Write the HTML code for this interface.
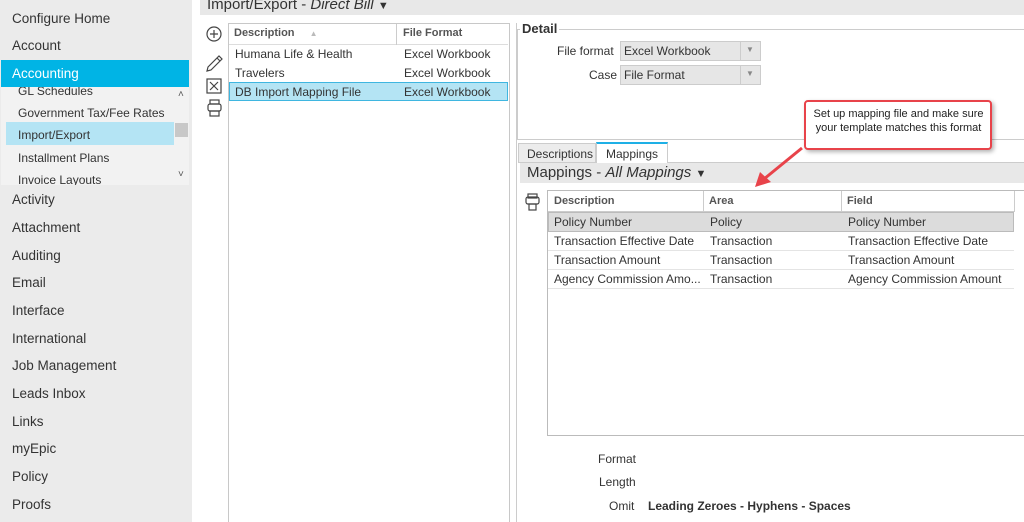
<!DOCTYPE html>
<html><head><style>
*{margin:0;padding:0;box-sizing:border-box}
body{width:1024px;height:522px;overflow:hidden;background:#fff;font-family:"Liberation Sans",sans-serif;font-size:12px;color:#333;position:relative}
.a{position:absolute;white-space:nowrap}
.side{left:0;top:0;width:192px;height:522px;background:#ebebeb}
.si{left:12px;font-size:13.5px;color:#333}
.sub{left:18px;font-size:12px;color:#333}
.hdr{background:#e8e8e8}
.b{font-weight:bold;color:#555;font-size:11px}
</style></head><body>
<div class="a side"></div>
<div class="a si" style="top:11px">Configure Home</div>
<div class="a si" style="top:38px">Account</div>
<div class="a" style="left:1px;top:60px;width:188px;height:27px;background:#00b4e5"></div>
<div class="a si" style="top:66px;color:#fff">Accounting</div>
<div class="a" style="left:1px;top:87px;width:188px;height:98px;background:#f2f2f2;overflow:hidden">
 <div class="a" style="left:5px;top:35px;width:168px;height:23px;background:#b4e4f4"></div>
 <div class="a" style="left:174px;top:36px;width:13px;height:14px;background:#c8c8c8"></div>
 <div class="a" style="left:177px;top:2px;font-size:10px;color:#555">˄</div>
 <div class="a" style="left:177px;top:82px;font-size:10px;color:#555">˅</div>
 <div class="a sub" style="left:17px;top:-3px">GL Schedules</div>
 <div class="a sub" style="left:17px;top:19px">Government Tax/Fee Rates</div>
 <div class="a sub" style="left:17px;top:41px">Import/Export</div>
 <div class="a sub" style="left:17px;top:64px">Installment Plans</div>
 <div class="a sub" style="left:17px;top:86px">Invoice Layouts</div>
</div>
<div class="a si" style="top:192px">Activity</div>
<div class="a si" style="top:220px">Attachment</div>
<div class="a si" style="top:248px">Auditing</div>
<div class="a si" style="top:275px">Email</div>
<div class="a si" style="top:303px">Interface</div>
<div class="a si" style="top:331px">International</div>
<div class="a si" style="top:358px">Job Management</div>
<div class="a si" style="top:386px">Leads Inbox</div>
<div class="a si" style="top:414px">Links</div>
<div class="a si" style="top:441px">myEpic</div>
<div class="a si" style="top:469px">Policy</div>
<div class="a si" style="top:497px">Proofs</div>

<div class="a hdr" style="left:200px;top:0;width:824px;height:15px"></div>
<div class="a" style="left:207px;top:-4px;font-size:15px;color:#333">Import/Export - <i>Direct Bill</i> <span style="font-size:11px">▼</span></div>

<svg class="a" style="left:204px;top:26px" width="20" height="96" fill="none" stroke="#444" stroke-width="1.2">
 <circle cx="10" cy="8" r="7"/><path d="M10 4v8M6 8h8"/>
 <path d="M4 41l11-11 3 3-11 11-4 1z M13 32l3 3"/>
 <rect x="3" y="53" width="14" height="14"/><path d="M6 56l8 8M14 56l-8 8"/>
 <rect x="4" y="78" width="13" height="7" rx="2"/><rect x="6" y="74" width="9" height="4"/><rect x="6" y="85" width="9" height="5"/>
</svg>
<div class="a" style="left:228px;top:23px;width:282px;height:499px;border:1px solid #c8c8c8;border-bottom:none"></div>
<div class="a" style="left:229px;top:24px;width:279px;height:21px;border-bottom:1px solid #ddd"></div>
<div class="a" style="left:396px;top:24px;width:1px;height:21px;background:#ccc"></div>
<div class="a b" style="left:234px;top:27px">Description <span style="color:#bbb;font-size:8px;margin-left:12px">▲</span></div>
<div class="a b" style="left:403px;top:27px">File Format</div>
<div class="a" style="left:229px;top:82px;width:279px;height:19px;background:#b4e4f4;border:1px solid #3fb6e0"></div>
<div class="a" style="left:235px;top:47px">Humana Life &amp; Health</div><div class="a" style="left:404px;top:47px">Excel Workbook</div>
<div class="a" style="left:235px;top:66px">Travelers</div><div class="a" style="left:404px;top:66px">Excel Workbook</div>
<div class="a" style="left:235px;top:85px">DB Import Mapping File</div><div class="a" style="left:404px;top:85px">Excel Workbook</div>

<div class="a" style="left:516px;top:23px;width:1px;height:499px;background:#ccc"></div>
<div class="a" style="left:517px;top:29px;width:507px;height:111px;border:1px solid #ccc;border-right:none"></div>
<div class="a" style="left:520px;top:21px;background:#fff;padding:0 2px;font-weight:bold;font-size:13px;color:#333">Detail</div>
<div class="a" style="left:557px;top:44px">File format</div>
<div class="a" style="left:589px;top:68px">Case</div>
<div class="a" style="left:620px;top:41px;width:141px;height:20px;background:#e6e6e6;border:1px solid #ccc"><span style="position:absolute;left:3px;top:2px">Excel Workbook</span><span style="position:absolute;left:119px;top:0;width:1px;height:18px;background:#ccc"></span><span style="position:absolute;left:125px;top:3px;font-size:8px;color:#888">▼</span></div>
<div class="a" style="left:620px;top:65px;width:141px;height:20px;background:#e6e6e6;border:1px solid #ccc"><span style="position:absolute;left:3px;top:2px">File Format</span><span style="position:absolute;left:119px;top:0;width:1px;height:18px;background:#ccc"></span><span style="position:absolute;left:125px;top:3px;font-size:8px;color:#888">▼</span></div>

<div class="a" style="left:518px;top:143px;width:78px;height:20px;background:#ececec;border:1px solid #ccc"></div>
<div class="a" style="left:527px;top:147px">Descriptions</div>
<div class="a" style="left:596px;top:142px;width:72px;height:22px;background:#fff;border:1px solid #ccc;border-top:2px solid #1eb0e6;border-bottom:none"></div>
<div class="a" style="left:606px;top:147px">Mappings</div>
<div class="a" style="left:668px;top:162px;width:356px;height:1px;background:#ccc"></div>
<div class="a hdr" style="left:520px;top:163px;width:504px;height:20px"></div>
<div class="a" style="left:527px;top:164px;font-size:15px;color:#333">Mappings - <i>All Mappings</i> <span style="font-size:11px">▼</span></div>
<svg class="a" style="left:524px;top:193px" width="18" height="20" fill="none" stroke="#444" stroke-width="1.2"><rect x="2" y="4" width="13" height="7" rx="2"/><rect x="4" y="1" width="9" height="4"/><rect x="5" y="11" width="7" height="6"/></svg>
<div class="a" style="left:547px;top:190px;width:480px;height:246px;border:1px solid #bbb;border-right:none"></div>
<div class="a" style="left:548px;top:191px;width:466px;height:21px;border-bottom:1px solid #ccc"></div>
<div class="a" style="left:703px;top:191px;width:1px;height:21px;background:#ccc"></div>
<div class="a" style="left:841px;top:191px;width:1px;height:21px;background:#ccc"></div>
<div class="a" style="left:1014px;top:191px;width:1px;height:21px;background:#ccc"></div>
<div class="a b" style="left:554px;top:195px">Description</div><div class="a b" style="left:709px;top:195px">Area</div><div class="a b" style="left:847px;top:195px">Field</div>
<div class="a" style="left:548px;top:212px;width:466px;height:20px;background:#dcdcdc;border:1px solid #bbb"></div>
<div class="a" style="left:548px;top:250px;width:466px;height:1px;background:#e4e4e4"></div>
<div class="a" style="left:548px;top:269px;width:466px;height:1px;background:#e4e4e4"></div>
<div class="a" style="left:548px;top:288px;width:466px;height:1px;background:#e4e4e4"></div>
<div class="a" style="left:554px;top:215px">Policy Number</div><div class="a" style="left:710px;top:215px">Policy</div><div class="a" style="left:848px;top:215px">Policy Number</div>
<div class="a" style="left:554px;top:234px">Transaction Effective Date</div><div class="a" style="left:710px;top:234px">Transaction</div><div class="a" style="left:848px;top:234px">Transaction Effective Date</div>
<div class="a" style="left:554px;top:253px">Transaction Amount</div><div class="a" style="left:710px;top:253px">Transaction</div><div class="a" style="left:848px;top:253px">Transaction Amount</div>
<div class="a" style="left:554px;top:272px">Agency Commission Amo...</div><div class="a" style="left:710px;top:272px">Transaction</div><div class="a" style="left:848px;top:272px">Agency Commission Amount</div>

<div class="a" style="left:598px;top:452px">Format</div>
<div class="a" style="left:599px;top:475px">Length</div>
<div class="a" style="left:609px;top:499px">Omit</div>
<div class="a" style="left:648px;top:499px;font-weight:bold;color:#333">Leading Zeroes - Hyphens - Spaces</div>

<div class="a" style="left:804px;top:100px;width:188px;height:50px;background:#fff;border:2px solid #e8434a;border-radius:4px;box-shadow:2px 2px 4px rgba(0,0,0,.3)"></div>
<div class="a" style="left:812px;top:107px;font-size:11px;color:#222;line-height:14px;text-align:center;width:173px;white-space:normal">Set up mapping file and make sure your template matches this format</div>
<svg class="a" style="left:750px;top:145px" width="60" height="50"><path d="M52 3L14 34" stroke="#e8434a" stroke-width="3"/><path d="M5 42L10 27L21 37z" fill="#e8434a"/></svg>
</body></html>
